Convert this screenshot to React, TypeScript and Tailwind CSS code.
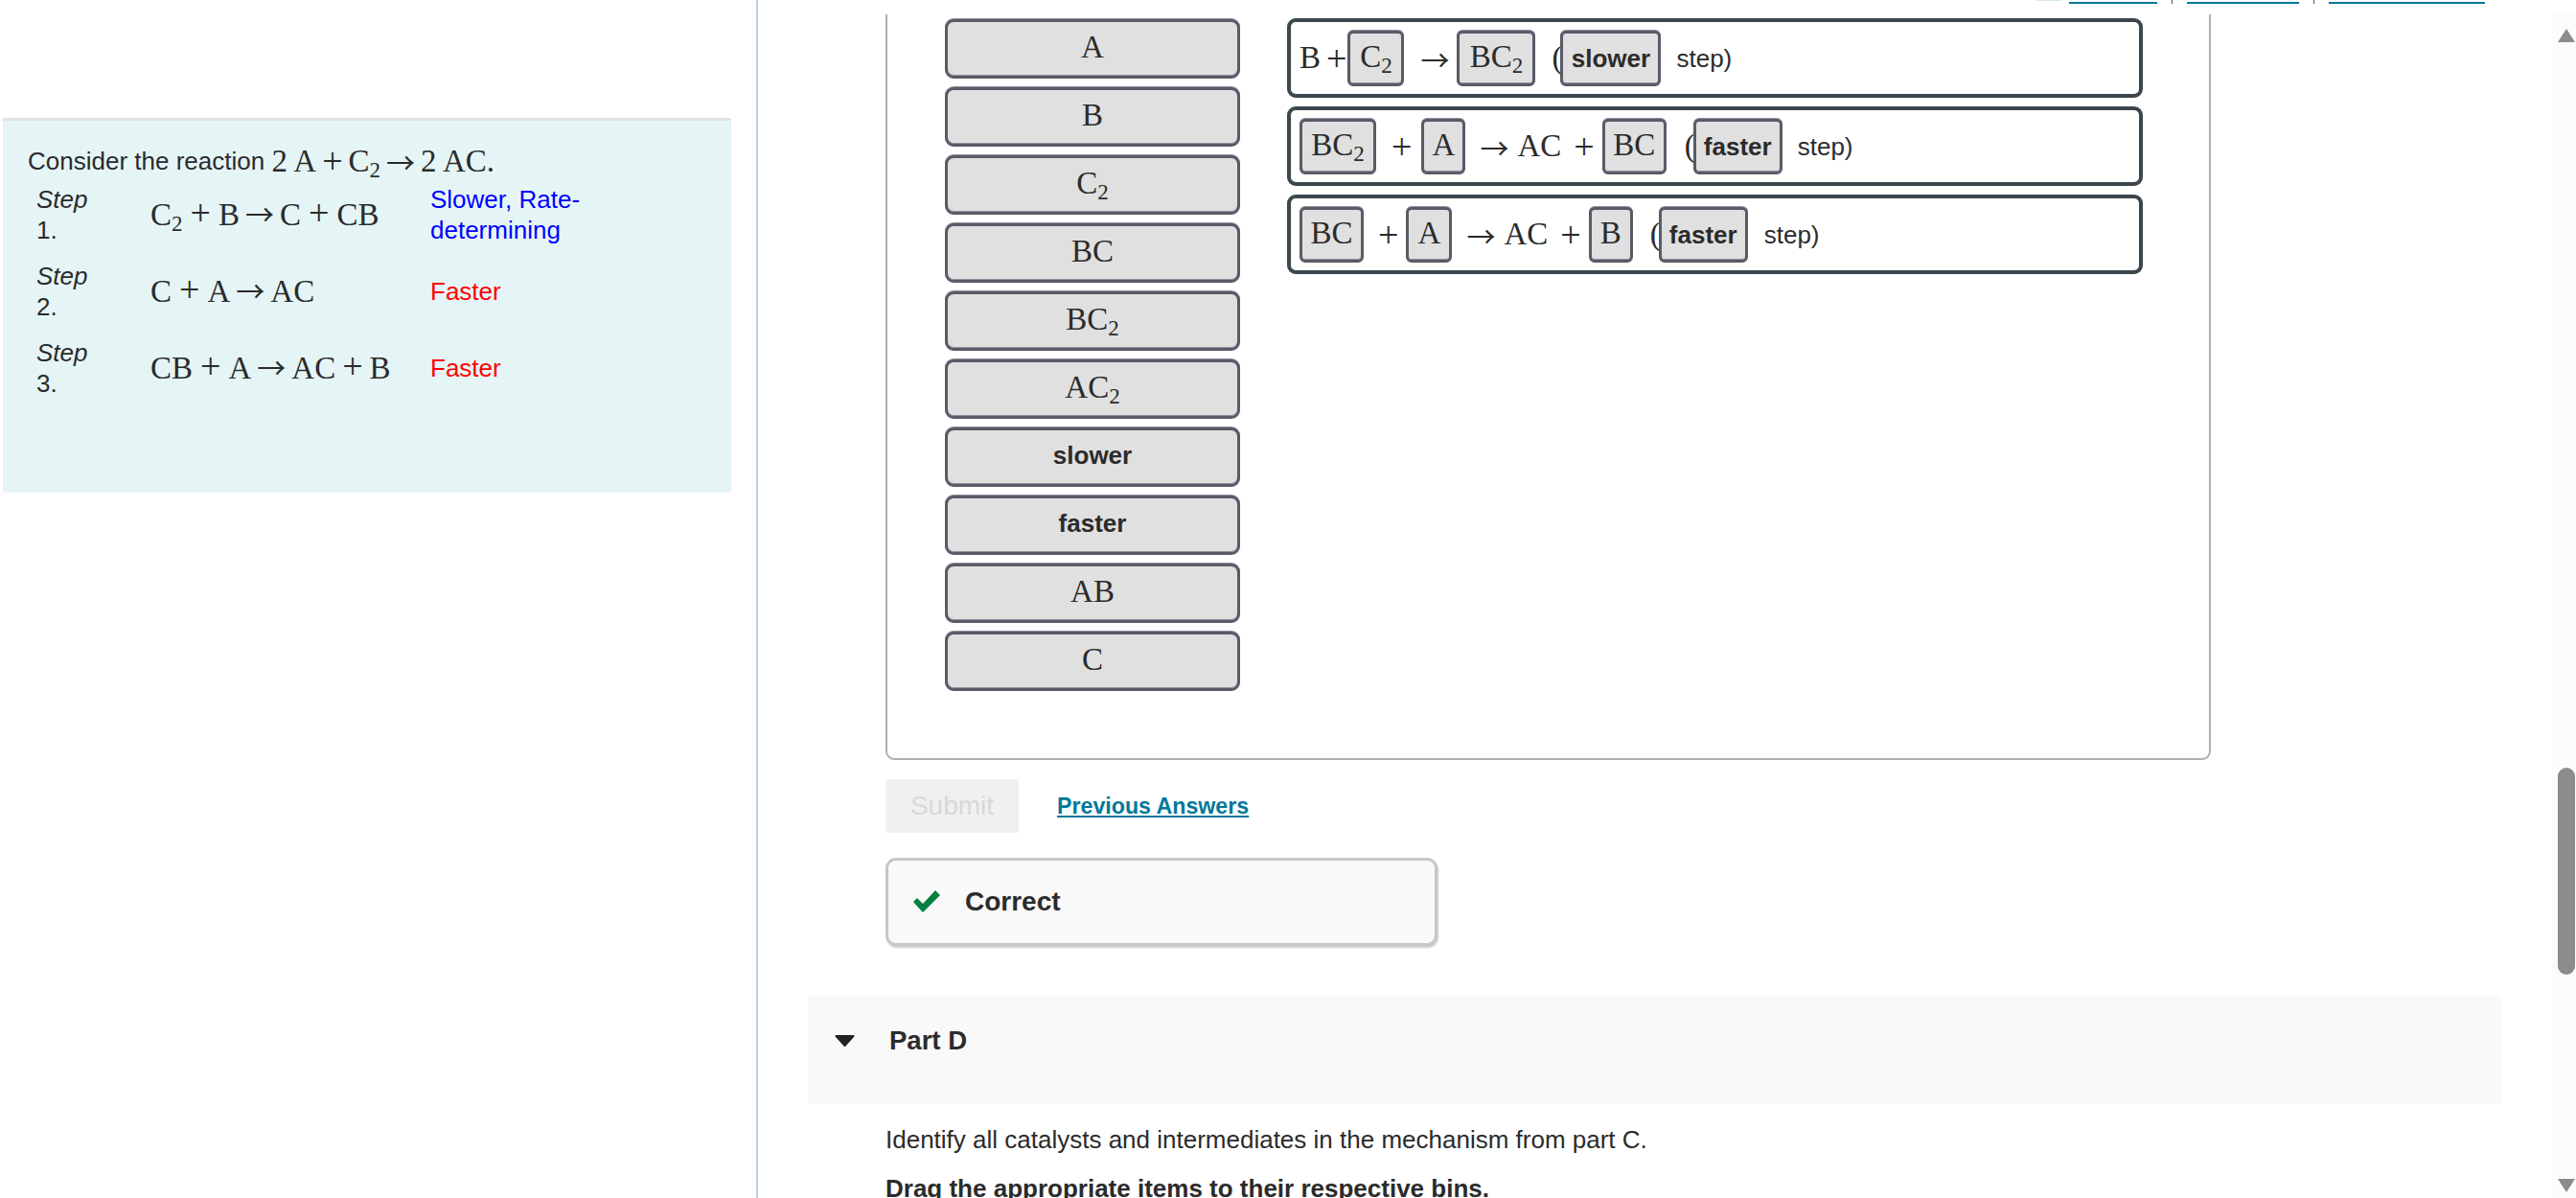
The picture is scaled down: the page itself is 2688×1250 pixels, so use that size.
const sans = "font-['Liberation_Sans',Arial,sans-serif]"

function M({children, className = ''}: {children: React.ReactNode; className?: string}) {
  return <span className={`font-['Liberation_Serif',serif] text-[33px] leading-none text-[#2b2b2b] whitespace-pre ${className}`}>{children}</span>
}

function Sub({children}: {children: React.ReactNode}) {
  return <span className="text-[23px] relative top-[6px]">{children}</span>
}

// plus and arrow are wider than the serif's own glyphs
function P({className = ''}: {className?: string}) {
  return <span className={`font-['Liberation_Serif',serif] text-[38px] leading-none text-[#2b2b2b] ${className}`}>+</span>
}

function R({className = ''}: {className?: string}) {
  return <span className={`font-['Noto_Sans_CJK_JP',sans-serif] text-[30px] leading-none text-[#2b2b2b] ${className}`}>→</span>
}

const steps = [
  {n: '1.', eq: <>C<Sub>2</Sub><P className="ml-[8px]" /><M className="ml-[8px]">B</M><R className="ml-[6px]" /><M className="ml-[6px]">C</M><P className="ml-[8px]" /><M className="ml-[8px]">CB</M></>, label: <>Slower, Rate-<br />determining</>, color: 'text-[#0000ff]'},
  {n: '2.', eq: <>C<P className="ml-[8px]" /><M className="ml-[8px]">A</M><R className="ml-[6px]" /><M className="ml-[6px]">AC</M></>, label: <>Faster</>, color: 'text-[#ff0000]'},
  {n: '3.', eq: <>CB<P className="ml-[8px]" /><M className="ml-[8px]">A</M><R className="ml-[6px]" /><M className="ml-[6px]">AC</M><P className="ml-[7px]" /><M className="ml-[7px]">B</M></>, label: <>Faster</>, color: 'text-[#ff0000]'},
]

const items = [
  {t: <>A</>},
  {t: <>B</>},
  {t: <>C<Sub>2</Sub></>},
  {t: <>BC</>},
  {t: <>BC<Sub>2</Sub></>},
  {t: <>AC<Sub>2</Sub></>},
  {t: 'slower', bold: true},
  {t: 'faster', bold: true},
  {t: <>AB</>},
  {t: <>C</>},
]

function Chip({children, w, className = '', bold}: {children: React.ReactNode; w: string; className?: string; bold?: boolean}) {
  return (
    <div className={`${w} ${className} h-[58px] shrink-0 flex items-center justify-center rounded-[6px] border-[3px] border-[#5a5a68] shadow-[0_-1px_0_#9090a0,inset_0_-1px_0_#9090a0] bg-[#e0e0e0]`}>
      {bold ? <span className="mt-[2px] text-[26px] font-bold text-[#2b2b2b]">{children}</span> : <M className="mb-[2px]">{children}</M>}
    </div>
  )
}

function Bin({children}: {children: React.ReactNode}) {
  return (
    <div className="h-[83px] w-full flex items-center pl-[9px] rounded-[9px] border-4 border-[#3b474c] bg-white">
      {children}
    </div>
  )
}

function Step({className = ''}: {className?: string}) {
  return <span className={`mt-[2px] text-[26px] text-[#2b2b2b] whitespace-pre ${className}`}>step)</span>
}

export default function App() {
  return (
    <div className={`${sans} w-[2688px] h-[1250px] overflow-hidden flex bg-white`}>
      {/* left passage */}
      <div className="w-[791px] h-full shrink-0 border-r-2 border-[#bdd0e2] pl-[3px] pt-[123px]">
        <div className="w-[760px] h-[391px] border-t-[3px] border-[#dfe3e5] bg-[#e5f5f6] pl-[26px] pt-[22px] text-[26px] text-[#2b2b2b]">
          <div className="h-[40px] flex items-center whitespace-pre">
            Consider the reaction <M>2 A</M><P className="ml-[6px]" /><M className="ml-[6px]">C<Sub>2</Sub></M><R className="ml-[6px]" /><M className="ml-[6px]">2 AC.</M>
          </div>
          <div className="mt-[4px] grid grid-cols-[119px_292px_1fr] auto-rows-[64px] gap-y-[16px] pl-[9px] leading-[32px]">
            {steps.map(s => (
              <div key={s.n} className="contents">
                <div><i>Step</i><br />{s.n}</div>
                <div className="flex items-center pb-[4px] whitespace-pre"><M>{s.eq}</M></div>
                <div className={`flex items-center ${s.color}`}><div>{s.label}</div></div>
              </div>
            ))}
          </div>
        </div>
      </div>

      {/* question column */}
      <div className="flex-1 h-full">
        <div className="h-[15px] flex items-start pl-[1334px]">
          <div className="w-[26px] h-[1px] bg-[#d5e8ee]" />
          <div className="ml-[8px] mt-[2px] w-[92px] h-[2px] bg-[#00789a]" />
          <div className="ml-[15px] w-[1px] h-[4px] bg-[#555555]" />
          <div className="ml-[15px] mt-[2px] w-[117px] h-[2px] bg-[#00789a]" />
          <div className="ml-[15px] w-[1px] h-[4px] bg-[#555555]" />
          <div className="ml-[15px] mt-[2px] w-[163px] h-[2px] bg-[#00789a]" />
        </div>

        <div className="ml-[133px] w-[1383px] h-[778px] rounded-b-[9px] border-x-2 border-b-2 border-[#aeaeae] pl-[60px] pr-[69px] pt-[4px] flex gap-[49px]">
          <div className="w-[308px] shrink-0 mt-[1px] flex flex-col gap-[9px]">
            {items.map((it, i) => (
              <div key={i} className="h-[62px] pb-[3px] flex items-center justify-center rounded-[9px] border-[3px] border-[#5a5a68] shadow-[0_-1px_0_#9090a0,inset_0_-1px_0_#9090a0] bg-[#e0e0e0]">
                {it.bold ? <span className="text-[26px] font-bold text-[#2b2b2b]">{it.t}</span> : <M>{it.t}</M>}
              </div>
            ))}
          </div>
          <div className="flex-1 flex flex-col gap-[9px]">
            <Bin>
              <M>B</M>
              <P className="ml-[6px]" />
              <Chip w="w-[59px]" className="ml-[1px]">C<Sub>2</Sub></Chip>
              <R className="ml-[17px]" />
              <Chip w="w-[82px]" className="ml-[8px]">BC<Sub>2</Sub></Chip>
              <M className="ml-[17px]">(</M>
              <Chip w="w-[105px]" className="ml-[-2px]" bold>slower</Chip>
              <Step className="ml-[16px]" />
            </Bin>
            <Bin>
              <Chip w="w-[80px]">BC<Sub>2</Sub></Chip>
              <P className="ml-[16px]" />
              <Chip w="w-[46px]" className="ml-[10px]">A</Chip>
              <R className="ml-[15px]" />
              <M className="ml-[9px]">AC</M>
              <P className="ml-[13px]" />
              <Chip w="w-[67px]" className="ml-[8px]">BC</Chip>
              <M className="ml-[19px]">(</M>
              <Chip w="w-[93px]" className="ml-[-2px]" bold>faster</Chip>
              <Step className="ml-[16px]" />
            </Bin>
            <Bin>
              <Chip w="w-[67px]">BC</Chip>
              <P className="ml-[15px]" />
              <Chip w="w-[48px]" className="ml-[8px]">A</Chip>
              <R className="ml-[15px]" />
              <M className="ml-[9px]">AC</M>
              <P className="ml-[13px]" />
              <Chip w="w-[46px]" className="ml-[8px]">B</Chip>
              <M className="ml-[18px]">(</M>
              <Chip w="w-[93px]" className="ml-[-2px]" bold>faster</Chip>
              <Step className="ml-[17px]" />
            </Bin>
          </div>
        </div>

        <div className="ml-[133px] mt-[20px] flex items-center">
          <div className="w-[139px] h-[56px] rounded-[3px] bg-[#f0f0f0] flex items-center justify-center text-[28px] text-[#d8d8d8]">Submit</div>
          <a className="ml-[40px] text-[23.2px] font-bold text-[#00789a] underline">Previous Answers</a>
        </div>

        <div className="ml-[133px] mt-[26px] w-[576px] h-[92px] rounded-[11px] border-[3px] border-[#c7c7c7] bg-[#f9f9f9] shadow-[1px_2px_2px_rgba(0,0,0,0.2)] flex items-center pl-[25px]">
          <svg width="30" height="24" viewBox="0 0 30 24" className="shrink-0">
            <path d="M1 12 L5 8 L11 14 L24 0 L29 5 L11 23 Z" fill="#05803f" />
          </svg>
          <span className="ml-[25px] text-[28px] font-bold text-[#2b2b2b]">Correct</span>
        </div>

        <div className="ml-[52px] mt-[52px] w-[1768px] h-[113px] bg-[#f9f9f9] flex items-center pl-[28px] pb-[20px]">
          <svg width="21" height="12" viewBox="0 0 21 12" className="shrink-0">
            <path d="M1.5 1 H19.5 L10.5 11 Z" fill="#222222" stroke="#222222" strokeWidth="2" strokeLinejoin="round" />
          </svg>
          <span className="ml-[36px] text-[27.5px] font-bold text-[#2b2b2b]">Part D</span>
        </div>

        <div className="ml-[133px] mt-[21px] text-[26px] leading-[32px] text-[#2b2b2b] whitespace-pre">Identify all catalysts and intermediates in the mechanism from part C.</div>
        <div className="ml-[133px] mt-[19px] text-[26px] leading-[32px] font-bold text-[#2b2b2b] whitespace-pre">Drag the appropriate items to their respective bins.</div>
      </div>

      {/* scrollbar */}
      <div className="w-[25px] h-full shrink-0 mt-[14px] bg-[#fcfcfc] flex flex-col items-center pl-[5px]">
        <svg width="18" height="14" viewBox="0 0 18 14" className="mt-[16px]"><path d="M9 0 L18 14 H0 Z" fill="#8c8c8c" /></svg>
        <div className="mt-[757px] w-[18px] h-[216px] rounded-[9px] bg-[#8c8c8c]" />
        <svg width="18" height="14" viewBox="0 0 18 14" className="mt-[213px]"><path d="M0 0 H18 L9 14 Z" fill="#8c8c8c" /></svg>
      </div>
    </div>
  )
}
